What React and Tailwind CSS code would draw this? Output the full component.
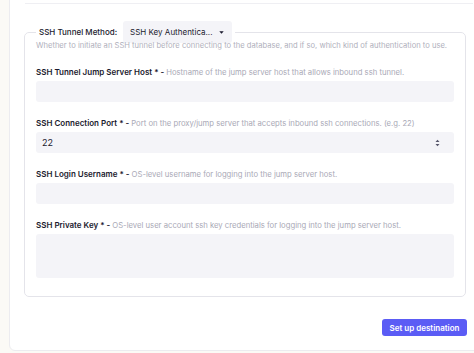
import React from 'react';

const font = { fontFamily: 'Inter, "Noto Sans", sans-serif' };

function Field({ label, hint, children }) {
  return (
    <div className="flex flex-col">
      <div className="text-[8px] leading-[12px] h-[12px] mb-[3px] whitespace-nowrap">
        <span className="font-semibold text-[#1b1a2e]">{label} * - </span>
        <span className="text-[7.7px] text-[#a9a9b6]">{hint}</span>
      </div>
      {children}
    </div>
  );
}

export default function App() {
  return (
    <div style={font} className="w-[474px] h-[353px] bg-[#fbfaf6] overflow-hidden">
      <div className="ml-[9px] w-[480px] h-[357px] bg-white border border-[#ececf0] rounded-[6px] -mt-[6px] flex flex-col">
        {/* previous section edge */}
        <div className="mx-[15px] h-[9px] border-b border-[#efeff3]" />

        <fieldset className="mt-[17px] mx-[14px] w-[442px] border border-[#e4e4ea] rounded-[5px] px-[11px] pb-[18px] pt-0">
          <legend className="px-[3px] flex items-center text-[8px] font-medium text-[#1b1a2e]">
            <span className="mr-[6px]">SSH Tunnel Method:</span>
            <span className="bg-[#f4f4f8] rounded-[3px] h-[22px] pl-[7px] pr-[7px] flex items-center text-[8px] font-normal text-[#1b1a2e]">
              SSH Key Authentica...
              <svg width="7" height="7" viewBox="0 0 8 8" className="ml-[6px]">
                <path d="M1.5 2.5 L4 5.5 L6.5 2.5 Z" fill="#1b1a2e" />
              </svg>
            </span>
          </legend>

          <div className="text-[7.6px] leading-[10px] text-[#b0b0bc] -mt-[2px] whitespace-nowrap">
            Whether to initiate an SSH tunnel before connecting to the database, and if so, which kind of authentication to use.
          </div>

          <div className="mt-[15px] flex flex-col gap-[15px]">
            <Field label="SSH Tunnel Jump Server Host" hint="Hostname of the jump server host that allows inbound ssh tunnel.">
              <div className="h-[21px] bg-[#f4f4f8] rounded-[3px]" />
            </Field>
            <Field label="SSH Connection Port" hint="Port on the proxy/jump server that accepts inbound ssh connections. (e.g. 22)">
              <div className="h-[21px] bg-[#f4f4f8] rounded-[3px] flex items-center justify-between pl-[6px] pr-[14px] text-[9px] text-[#1b1a2e]">
                <span>22</span>
                <svg width="5" height="8" viewBox="0 0 5 8">
                  <path d="M0.5 3 L2.5 0.8 L4.5 3 Z" fill="#55556a" />
                  <path d="M0.5 5 L2.5 7.2 L4.5 5 Z" fill="#55556a" />
                </svg>
              </div>
            </Field>
            <Field label="SSH Login Username" hint="OS-level username for logging into the jump server host.">
              <div className="h-[21px] bg-[#f4f4f8] rounded-[3px]" />
            </Field>
            <Field label="SSH Private Key" hint="OS-level user account ssh key credentials for logging into the jump server host.">
              <div className="h-[44px] bg-[#f4f4f8] rounded-[3px]" />
            </Field>
          </div>
        </fieldset>

        <div className="flex justify-end mr-[21px] mt-[22px]">
          <button className="h-[17px] w-[85px] bg-[#5b5cf5] rounded-[3px] text-white text-[8px] font-semibold">
            Set up destination
          </button>
        </div>
      </div>
    </div>
  );
}
